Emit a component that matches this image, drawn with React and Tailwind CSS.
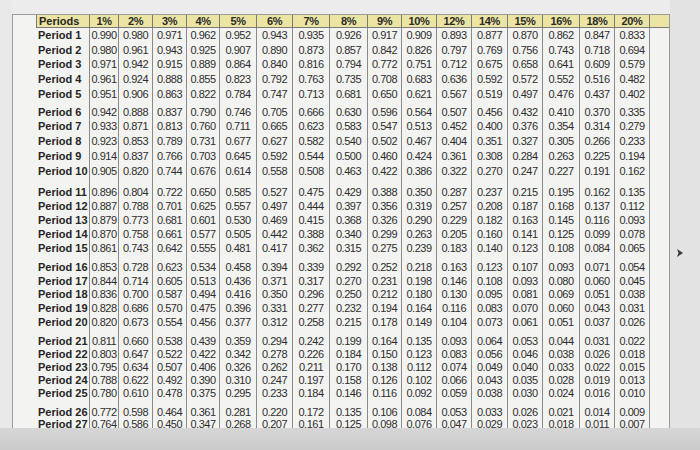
import React from 'react';

const rates = [1, 2, 3, 4, 5, 6, 7, 8, 9, 10, 12, 14, 15, 16, 18, 20];

// row height per group of five periods (the photo gets tighter towards the bottom)
const groups = [
  { rows: [1, 2, 3, 4, 5], h: 'h-[14.75px]', gap: 'h-[3px]' },
  { rows: [6, 7, 8, 9, 10], h: 'h-[14.75px]', gap: 'h-[7px]' },
  { rows: [11, 12, 13, 14, 15], h: 'h-[14px]', gap: 'h-[5px]' },
  { rows: [16, 17, 18, 19, 20], h: 'h-[13.75px]', gap: 'h-[6px]' },
  { rows: [21, 22, 23, 24, 25], h: 'h-[13px]', gap: 'h-[6px]' },
  { rows: [26, 27], h: 'h-[12px]', gap: null },
];

const cols =
  'grid grid-cols-[54px_29px_34px_34px_33px_37px_36px_37px_38px_34px_35px_35px_36px_35px_37px_35px_35px]';

const pv = (r, n) => Math.pow(1 + r / 100, -n).toFixed(3);

function Row({ period, h }) {
  return (
    <div className={`${cols} ${h}`}>
      <div className="flex items-center pl-[2px] border-r border-[#8a8a8a] text-[11px] font-bold text-[#262626] whitespace-nowrap">
        Period {period}
      </div>
      {rates.map((r) => (
        <div
          key={r}
          className="flex items-center justify-center border-r border-[#8a8a8a] text-[11px] tracking-[-0.5px] text-[#2e2e2e]"
        >
          {pv(r, period)}
        </div>
      ))}
    </div>
  );
}

function Gap({ h }) {
  return (
    <div className={`${cols} ${h}`}>
      <div className="border-r border-[#8a8a8a]" />
      {rates.map((r) => (
        <div key={r} className="border-r border-[#8a8a8a]" />
      ))}
    </div>
  );
}

export default function App() {
  return (
    <div className="w-[700px] h-[450px] overflow-hidden flex flex-col bg-[#ececec] font-['Liberation_Sans',Arial,sans-serif] leading-none">
      <div className="h-[428px] flex">
        <div className="w-[12px] bg-[#e9e9e9]" />
        <div className="w-[658px] mt-[14px] h-[414px] overflow-hidden border-l border-r border-t border-[#9a9a9a] bg-[#f3f3f1] pl-[23px]">
          {/* header */}
          <div className={`${cols} h-[13px] bg-[#ebe4a3] border-b border-[#7a7a7a]`}>
            <div className="flex items-center pl-[2px] border-l border-r border-[#7a7a7a] text-[11px] font-bold text-[#262626]">
              Periods
            </div>
            {rates.map((r) => (
              <div
                key={r}
                className="flex items-center justify-center border-r border-[#7a7a7a] text-[11px] font-bold tracking-[-0.4px] text-[#2a2a2a]"
              >
                {r}%
              </div>
            ))}
          </div>

          {groups.map((g, i) => (
            <div key={i}>
              {g.rows.map((p) => (
                <Row key={p} period={p} h={g.h} />
              ))}
              {g.gap && <Gap h={g.gap} />}
            </div>
          ))}
        </div>
        <div className="flex-1 bg-[#e3e3e3] pt-[248px] pl-[6px]">
          <svg width="8" height="10" viewBox="0 0 8 10">
            <path d="M1 1 L7 5 L1 9 L2.5 5 Z" fill="#3a3a3a" />
          </svg>
        </div>
      </div>
      <div className="flex-1 bg-gradient-to-b from-[#d6d6d6] to-[#cbcbcb]" />
    </div>
  );
}
